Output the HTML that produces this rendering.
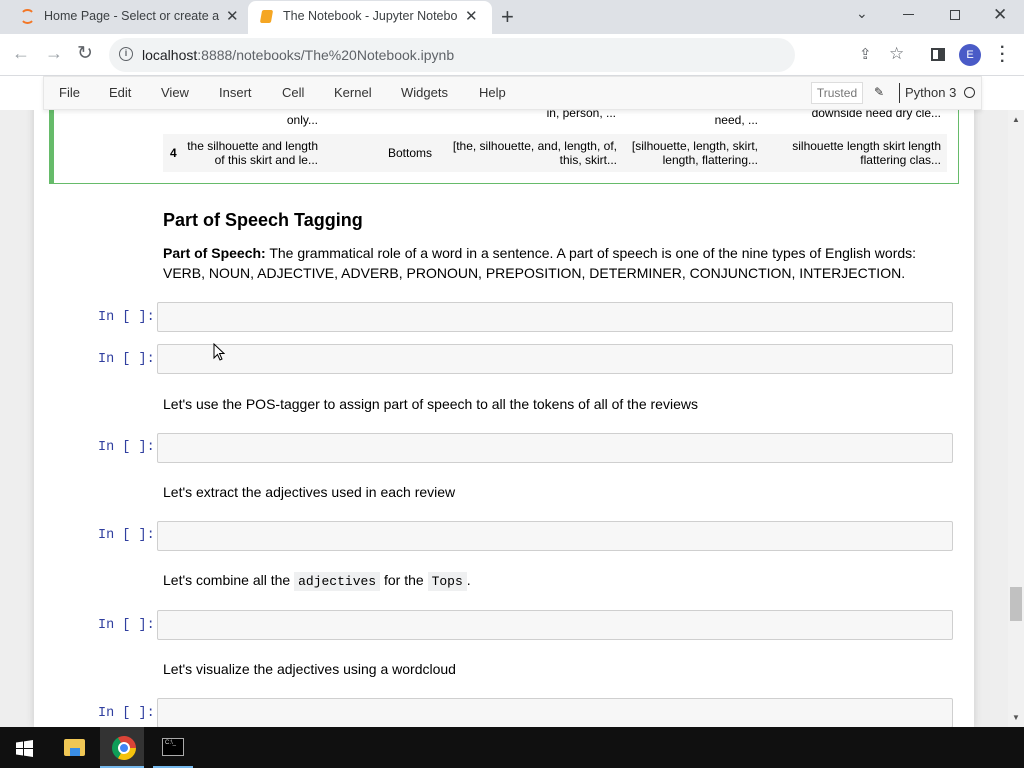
<!DOCTYPE html>
<html><head><meta charset="utf-8"><style>
*{box-sizing:border-box;margin:0;padding:0}
body{width:1024px;height:768px;overflow:hidden;position:relative;background:#eee;font-family:"Liberation Sans",sans-serif;font-size:14px;color:#000}
.abs{position:absolute}
.hdr{z-index:5}
.prompt{position:absolute;left:98px;font-family:"Liberation Mono",monospace;font-size:13.5px;color:#303f9f}
.inp{position:absolute;left:157px;width:796px;height:30px;background:#f7f7f7;border:1px solid #cfcfcf;border-radius:2px}
.md{position:absolute;left:163px;font-size:14px}
code{font-family:"Liberation Mono",monospace;font-size:13px;background:#eff0f1;padding:2px 4px}
.tc{position:absolute;font-size:12px;text-align:right;line-height:14px}
</style></head><body>
<!-- notebook container -->
<div class="abs" style="left:34px;top:100px;width:940px;height:627px;background:#fff;box-shadow:0 0 8px rgba(0,0,0,.15)"></div>
<div class="abs" style="left:1008px;top:110px;width:16px;height:617px;background:#f1f1f1"></div>
<div class="abs" style="left:1012px;top:115px;font-size:8px;color:#555">▲</div>
<div class="abs" style="left:1012px;top:713px;font-size:8px;color:#555">▼</div>
<div class="abs" style="left:1010px;top:587px;width:12px;height:34px;background:#c1c1c1"></div>
<!-- green cell -->
<div class="abs" style="left:49px;top:100px;width:910px;height:84px;border:1px solid #66bb6a;border-left:5px solid #66bb6a;border-top:none"></div>
<div class="tc" style="left:250px;top:113px;width:68px">only...</div>
<div class="tc" style="left:500px;top:106px;width:116px">in, person, ...</div>
<div class="tc" style="left:680px;top:113px;width:78px">need, ...</div>
<div class="tc" style="left:790px;top:106px;width:151px">downside need dry cle...</div>
<div class="abs" style="left:163px;top:134px;width:784px;height:38px;background:#f5f5f5"></div>
<div class="tc" style="left:170px;top:146px;font-weight:bold">4</div>
<div class="tc" style="left:180px;top:139px;width:138px">the silhouette and length<br>of this skirt and le...</div>
<div class="tc" style="left:370px;top:146px;width:62px">Bottoms</div>
<div class="tc" style="left:440px;top:139px;width:177px">[the, silhouette, and, length, of,<br>this, skirt...</div>
<div class="tc" style="left:620px;top:139px;width:138px">[silhouette, length, skirt,<br>length, flattering...</div>
<div class="tc" style="left:780px;top:139px;width:161px">silhouette length skirt length<br>flattering clas...</div>
<!-- content -->
<div class="md" style="top:210px;font-size:18px;font-weight:bold">Part of Speech Tagging</div>
<div class="md" style="top:243px;line-height:20px;width:790px"><b>Part of Speech:</b> The grammatical role of a word in a sentence. A part of speech is one of the nine types of English words: VERB, NOUN, ADJECTIVE, ADVERB, PRONOUN, PREPOSITION, DETERMINER, CONJUNCTION, INTERJECTION.</div>
<div class="prompt" style="top:310px">In [ ]:</div><div class="inp" style="top:302px"></div>
<div class="prompt" style="top:352px">In [ ]:</div><div class="inp" style="top:344px"></div>
<div class="md" style="top:396px">Let's use the POS-tagger to assign part of speech to all the tokens of all of the reviews</div>
<div class="prompt" style="top:440px">In [ ]:</div><div class="inp" style="top:433px"></div>
<div class="md" style="top:484px">Let's extract the adjectives used in each review</div>
<div class="prompt" style="top:528px">In [ ]:</div><div class="inp" style="top:521px"></div>
<div class="md" style="top:572px">Let's combine all the <code>adjectives</code> for the <code>Tops</code>.</div>
<div class="prompt" style="top:618px">In [ ]:</div><div class="inp" style="top:610px"></div>
<div class="md" style="top:661px">Let's visualize the adjectives using a wordcloud</div>
<div class="prompt" style="top:706px">In [ ]:</div><div class="inp" style="top:698px"></div>
<svg class="abs" style="left:213px;top:343px" width="12" height="19"><path d="M1 1 L1 15 L4.5 11.5 L7 17 L9 16 L6.5 10.5 L11 10.5 Z" fill="#fff" stroke="#000" stroke-width="1"/></svg>

<!-- header layers -->
<div class="abs hdr" style="left:0;top:0;width:1024px;height:34px;background:#dee1e6"></div>
<div class="abs hdr" style="left:20px;top:9px;width:15px;height:15px;border:2.5px solid #f37726;border-radius:50%;border-left-color:transparent;border-right-color:transparent"></div>
<div class="abs hdr" style="left:44px;top:9px;width:176px;overflow:hidden;white-space:nowrap;font-size:12.5px;color:#3c4043">Home Page - Select or create a n</div>
<div class="abs hdr" style="left:226px;top:7px;font-size:15px;color:#3c4043">✕</div>
<div class="abs hdr" style="left:248px;top:1px;width:244px;height:33px;background:#fff;border-radius:8px 8px 0 0"></div>
<div class="abs hdr" style="left:261px;top:10px;width:11px;height:13px;background:#f5a623;border-radius:2px;transform:skewX(-10deg)"></div>
<div class="abs hdr" style="left:283px;top:9px;width:174px;overflow:hidden;white-space:nowrap;font-size:12.5px;color:#3c4043">The Notebook - Jupyter Noteboo</div>
<div class="abs hdr" style="left:465px;top:7px;font-size:15px;color:#3c4043">✕</div>
<div class="abs hdr" style="left:501px;top:4px;font-size:22px;color:#3c4043">+</div>
<div class="abs hdr" style="left:856px;top:5px;font-size:14px;color:#3c4043">⌄</div>
<div class="abs hdr" style="left:903px;top:14px;width:11px;height:1px;background:#3c4043"></div>
<div class="abs hdr" style="left:950px;top:10px;width:10px;height:10px;border:1px solid #3c4043"></div>
<div class="abs hdr" style="left:993px;top:5px;font-size:17px;color:#3c4043">✕</div>
<div class="abs hdr" style="left:0;top:34px;width:1024px;height:42px;background:#fff;border-bottom:1px solid #dadce0"></div>
<div class="abs hdr" style="left:12px;top:43px;font-size:18px;color:#9aa0a6">←</div>
<div class="abs hdr" style="left:45px;top:43px;font-size:18px;color:#9aa0a6">→</div>
<div class="abs hdr" style="left:77px;top:42px;font-size:19px;color:#5f6368">↻</div>
<div class="abs hdr" style="left:109px;top:38px;width:686px;height:34px;background:#f1f3f4;border-radius:17px"></div>
<div class="abs hdr" style="left:119px;top:47px;width:14px;height:14px;border:1.5px solid #5f6368;border-radius:50%;font-size:9px;text-align:center;line-height:11px;color:#5f6368;font-weight:bold">i</div>
<div class="abs hdr" style="left:142px;top:47px;font-size:14px;color:#202124">localhost<span style="color:#5f6368">:8888/notebooks/The%20Notebook.ipynb</span></div>
<div class="abs hdr" style="left:859px;top:45px;font-size:15px;color:#5f6368">⇪</div>
<div class="abs hdr" style="left:889px;top:44px;font-size:17px;color:#5f6368">☆</div>
<div class="abs hdr" style="left:931px;top:48px;width:14px;height:13px;border:2px solid #3c4043;border-right-width:7px"></div>
<div class="abs hdr" style="left:959px;top:44px;width:22px;height:22px;border-radius:50%;background:#4a5bc7;color:#fff;font-size:11px;text-align:center;line-height:22px">E</div>
<div class="abs hdr" style="left:1000px;top:44px;font-size:16px;color:#3c4043;font-weight:bold;line-height:7px">·<br>·<br>·</div>
<div class="abs hdr" style="left:0;top:76px;width:1024px;height:34px;background:#fff"></div>
<div class="abs hdr" style="left:43px;top:76px;width:939px;height:34px;border:1px solid #e7e7e7;background:#f8f8f8;box-shadow:0 2px 4px rgba(0,0,0,.08)"></div>
<div class="abs hdr" style="left:59px;top:85px;font-size:13px;color:#333">File</div>
<div class="abs hdr" style="left:109px;top:85px;font-size:13px;color:#333">Edit</div>
<div class="abs hdr" style="left:161px;top:85px;font-size:13px;color:#333">View</div>
<div class="abs hdr" style="left:219px;top:85px;font-size:13px;color:#333">Insert</div>
<div class="abs hdr" style="left:282px;top:85px;font-size:13px;color:#333">Cell</div>
<div class="abs hdr" style="left:334px;top:85px;font-size:13px;color:#333">Kernel</div>
<div class="abs hdr" style="left:401px;top:85px;font-size:13px;color:#333">Widgets</div>
<div class="abs hdr" style="left:479px;top:85px;font-size:13px;color:#333">Help</div>
<div class="abs hdr" style="left:811px;top:82px;width:52px;height:22px;border:1px solid #ddd;background:#fff;font-size:12px;color:#777;text-align:center;line-height:20px">Trusted</div>
<div class="abs hdr" style="left:874px;top:85px;font-size:12px;color:#333">✎</div>
<div class="abs hdr" style="left:899px;top:83px;width:1px;height:20px;background:#333"></div>
<div class="abs hdr" style="left:905px;top:85px;font-size:13px;color:#333">Python 3</div>
<div class="abs hdr" style="left:964px;top:87px;width:11px;height:11px;border:1.5px solid #333;border-radius:50%"></div>

<!-- taskbar -->
<div class="abs hdr" style="left:0;top:727px;width:1024px;height:41px;background:#101010"></div>
<svg class="abs hdr" style="left:16px;top:740px" width="17" height="17"><path d="M0 2.5L7 1.5V8H0ZM8 1.4L17 0V8H8ZM0 9H7V15.5L0 14.5ZM8 9H17V17L8 15.6Z" fill="#fff"/></svg>
<div class="abs hdr" style="left:64px;top:739px;width:21px;height:17px;background:#f0c755;border-radius:2px"></div>
<div class="abs hdr" style="left:70px;top:748px;width:10px;height:8px;background:#3a8ee6"></div>
<div class="abs hdr" style="left:100px;top:727px;width:44px;height:41px;background:#333"></div>
<div class="abs hdr" style="left:100px;top:766px;width:44px;height:2px;background:#76b9ed"></div>
<div class="abs hdr" style="left:112px;top:736px;width:24px;height:24px;border-radius:50%;background:conic-gradient(from -30deg,#db4437 0 120deg,#f4c20d 120deg 240deg,#0f9d58 240deg 360deg)"></div>
<div class="abs hdr" style="left:118px;top:742px;width:12px;height:12px;border-radius:50%;background:#4285f4;border:2px solid #fff"></div>
<div class="abs hdr" style="left:153px;top:766px;width:40px;height:2px;background:#76b9ed"></div>
<div class="abs hdr" style="left:162px;top:738px;width:22px;height:18px;background:#000;border:1px solid #aaa"></div>
<div class="abs hdr" style="left:165px;top:740px;font-size:6px;color:#ddd">C:\_</div>
</body></html>
